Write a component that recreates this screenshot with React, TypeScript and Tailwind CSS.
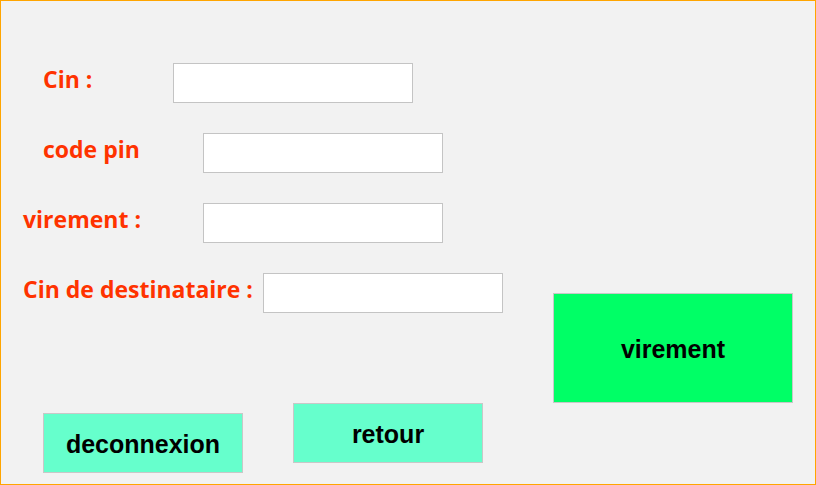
import React from 'react';

const labelCls = "font-['Open_Sans',sans-serif] font-bold text-[23px] leading-none text-[#ff3300] whitespace-nowrap mb-[7px]";
const inputCls = "w-[240px] h-[40px] bg-white border border-[#c4c4c4] outline-none px-2";
const btnCls = "flex items-center justify-center pt-[4px] border border-[#c8c8c8] font-['Liberation_Sans',sans-serif] font-bold text-[25px] text-black";

const App: React.FC = () => {
  return (
    <div className="w-[816px] h-[485px] border border-[#ffa500] bg-[#f2f2f2] overflow-hidden">
      {/* Cin */}
      <div className="flex items-center mt-[62px] ml-[42px]">
        <span className={`${labelCls} w-[130px]`}>Cin :</span>
        <input className={inputCls} />
      </div>

      {/* code pin */}
      <div className="flex items-center mt-[30px] ml-[42px]">
        <span className={`${labelCls} w-[160px]`}>code pin</span>
        <input className={inputCls} />
      </div>

      {/* virement */}
      <div className="flex items-center mt-[30px] ml-[22px]">
        <span className={`${labelCls} w-[180px]`}>virement :</span>
        <input className={inputCls} />
      </div>

      <div className="flex items-start mt-[30px]">
        <div className="w-[552px]">
          {/* Cin de destinataire */}
          <div className="flex items-center ml-[22px]">
            <span className={`${labelCls} w-[240px]`}>Cin de destinataire :</span>
            <input className={inputCls} />
          </div>

          <div className="flex items-start mt-[90px] ml-[42px]">
            <button className={`${btnCls} w-[200px] h-[60px] mt-[10px] bg-[#66ffcc]`}>deconnexion</button>
            <button className={`${btnCls} w-[190px] h-[60px] ml-[50px] bg-[#66ffcc]`}>retour</button>
          </div>
        </div>

        <button className={`${btnCls} w-[240px] h-[110px] mt-[20px] bg-[#00ff66]`}>virement</button>
      </div>
    </div>
  );
};

export default App;
